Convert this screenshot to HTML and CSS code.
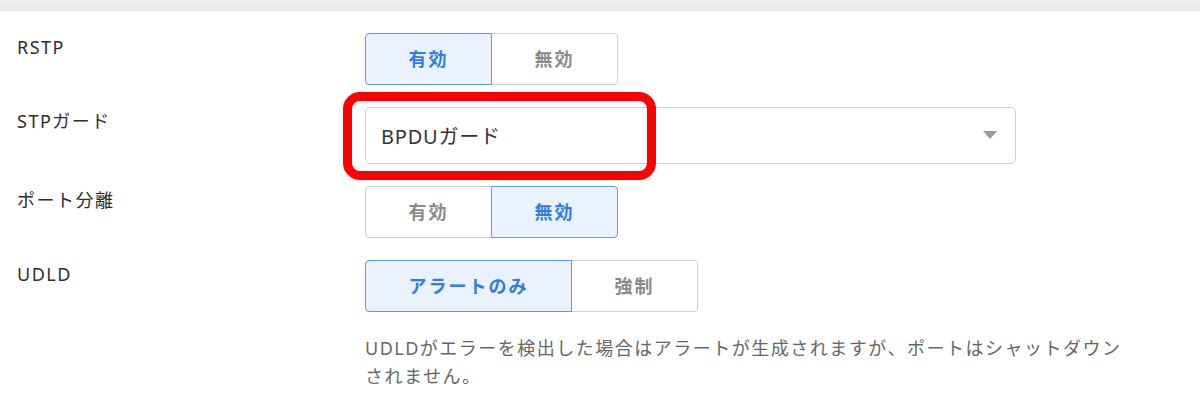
FILE: index.html
```html
<!DOCTYPE html>
<html lang="ja">
<head>
<meta charset="utf-8">
<title>Switch settings</title>
<link rel="stylesheet" href="styles.css">
</head>
<body>
<div class="topbar"></div>
<div class="form">
  <div class="row">
    <div class="label">RSTP</div>
    <div class="control">
      <div class="seg">
        <button class="seg-btn active">有効</button>
        <button class="seg-btn">無効</button>
      </div>
    </div>
  </div>
  <div class="row">
    <div class="label">STPガード</div>
    <div class="control">
      <div class="select-wrap">
        <div class="select">
          <span class="select-value">BPDUガード</span>
          <span class="caret"></span>
        </div>
        <div class="highlight"></div>
      </div>
    </div>
  </div>
  <div class="row">
    <div class="label">ポート分離</div>
    <div class="control">
      <div class="seg">
        <button class="seg-btn">有効</button>
        <button class="seg-btn active">無効</button>
      </div>
    </div>
  </div>
  <div class="row last">
    <div class="label">UDLD</div>
    <div class="control">
      <div class="seg">
        <button class="seg-btn active">アラートのみ</button>
        <button class="seg-btn">強制</button>
      </div>
      <p class="help">UDLDがエラーを検出した場合はアラートが生成されますが、ポートはシャットダウンされません。</p>
    </div>
  </div>
</div>
</body>
</html>
```

FILE: styles.css
```css
* { box-sizing: border-box; }
html, body {
  margin: 0;
  padding: 0;
  background: #ffffff;
  font-family: "Noto Sans", "Noto Sans CJK JP", sans-serif;
  color: #333333;
}
.topbar {
  height: 11px;
  background: linear-gradient(#f0f0f0, #eaeaea);
  border-bottom: 1px solid #e2e2e2;
}
.form {
  padding: 22px 0 0 17px;
}
.row {
  display: grid;
  grid-template-columns: 348px 651px;
  margin-bottom: 22px;
}
.label {
  font-size: 18px;
  line-height: 27px;
  letter-spacing: 1.5px;
  padding-top: 1px;
  color: #2e2e2e;
}
.control {
  display: flex;
  flex-direction: column;
  align-items: flex-start;
}
.seg {
  display: flex;
}
.seg-btn {
  position: relative;
  font-family: "Noto Sans", "Noto Sans CJK JP", sans-serif;
  font-size: 18px;
  font-weight: 700;
  letter-spacing: 2px;
  height: 52px;
  line-height: 50px;
  padding: 0 42.5px;
  min-width: 127px;
  border: 1px solid #cfcfcf;
  background: #ffffff;
  color: #8a8a8a;
  margin: 0;
}
.seg-btn + .seg-btn { margin-left: -1px; }
.seg-btn:first-child { border-radius: 4px 0 0 4px; }
.seg-btn:last-child { border-radius: 0 4px 4px 0; }
.seg-btn.active {
  z-index: 1;
  background: #e9f2fe;
  border-color: #5a9bf0;
  color: #2f7de6;
}
.select-wrap {
  position: relative;
  width: 651px;
}
.select {
  height: 57px;
  border: 1px solid #d2d2d2;
  border-radius: 5px;
  display: flex;
  align-items: center;
  justify-content: space-between;
  padding: 0 18px 0 15px;
  background: #fff;
}
.select-value {
  font-size: 20px;
  letter-spacing: 0.8px;
  color: #333333;
}
.caret {
  width: 0;
  height: 0;
  border-left: 7px solid transparent;
  border-right: 7px solid transparent;
  border-top: 8px solid #9a9a9a;
  margin-top: -1px;
}
.highlight {
  position: absolute;
  left: -22px;
  top: -15px;
  width: 313px;
  height: 88px;
  border: 9px solid #ff0000;
  border-radius: 17px;
  pointer-events: none;
}
.help {
  margin: 22px 0 0 0;
  width: 768px;
  font-size: 18px;
  line-height: 28px;
  letter-spacing: 1.5px;
  color: #666666;
}
```
